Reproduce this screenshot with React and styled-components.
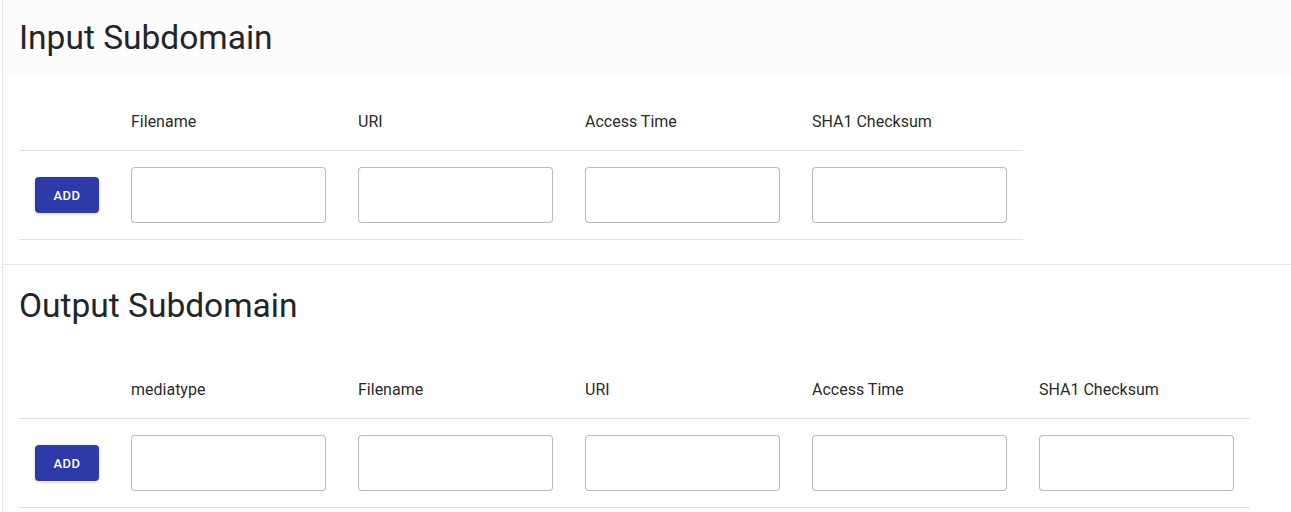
import React from 'react';
import styled, { createGlobalStyle } from 'styled-components';

const GlobalStyle = createGlobalStyle`
  html, body {
    margin: 0;
    padding: 0;
    background: #ffffff;
    font-family: Roboto, "Liberation Sans", Arial, sans-serif;
  }
`;

const Page = styled.div`
  margin-top: -4px;
  padding-left: 2px;
`;

const Card = styled.section`
  border: 1px solid #e6e6e6;
  border-right: none;
  border-bottom: none;
  background: #ffffff;
`;

const CardHeader = styled.div`
  height: 81px;
  padding: 0 16px;
  display: flex;
  align-items: center;
  background: ${(p) => (p.$tinted ? '#fcfcfc' : '#ffffff')};
`;

const Title = styled.h2`
  margin: 0;
  padding-top: 2px;
  font-size: 33.5px;
  font-weight: 400;
  color: #212529;
  line-height: 1.2;
`;

const CardBody = styled.div`
  padding: 16px 16px 24px;
`;

const Table = styled.table`
  border-collapse: collapse;
  font-family: Roboto, "Liberation Sans", Arial, sans-serif;
`;

const HeadCell = styled.th`
  padding: 16px;
  height: 24px;
  text-align: left;
  font-size: 16px;
  font-weight: 400;
  line-height: 24px;
  color: rgba(0, 0, 0, 0.87);
  border-bottom: 1px solid #e0e0e0;
  width: ${(p) => (p.$narrow ? '64px' : '195px')};
`;

const Cell = styled.td`
  padding: 16px;
  border-bottom: 1px solid #e0e0e0;
  vertical-align: middle;
`;

const AddButton = styled.button`
  width: 64px;
  height: 36px;
  border: none;
  border-radius: 4px;
  background: #2f3aa9;
  color: #ffffff;
  font-family: Roboto, "Liberation Sans", Arial, sans-serif;
  font-size: 13px;
  font-weight: 500;
  letter-spacing: 0.4px;
  text-transform: uppercase;
  box-shadow: 0 1px 3px rgba(0, 0, 0, 0.2);
  cursor: pointer;
`;

const Field = styled.input`
  display: block;
  box-sizing: border-box;
  width: 195px;
  height: 56px;
  border: 1px solid rgba(0, 0, 0, 0.27);
  border-radius: 4px;
  padding: 0 14px;
  font-size: 16px;
  font-family: inherit;
  outline: none;
`;

const SubdomainCard = ({ title, columns, tinted }) => (
  <Card>
    <CardHeader $tinted={tinted}>
      <Title>{title}</Title>
    </CardHeader>
    <CardBody>
      <Table>
        <thead>
          <tr>
            <HeadCell $narrow />
            {columns.map((c) => (
              <HeadCell key={c}>{c}</HeadCell>
            ))}
          </tr>
        </thead>
        <tbody>
          <tr>
            <Cell>
              <AddButton>Add</AddButton>
            </Cell>
            {columns.map((c) => (
              <Cell key={c}>
                <Field aria-label={c} />
              </Cell>
            ))}
          </tr>
        </tbody>
      </Table>
    </CardBody>
  </Card>
);

const App = () => (
  <>
    <GlobalStyle />
    <Page>
      <SubdomainCard
        tinted
        title="Input Subdomain"
        columns={['Filename', 'URI', 'Access Time', 'SHA1 Checksum']}
      />
      <SubdomainCard
        title="Output Subdomain"
        columns={['mediatype', 'Filename', 'URI', 'Access Time', 'SHA1 Checksum']}
      />
    </Page>
  </>
);

export default App;
